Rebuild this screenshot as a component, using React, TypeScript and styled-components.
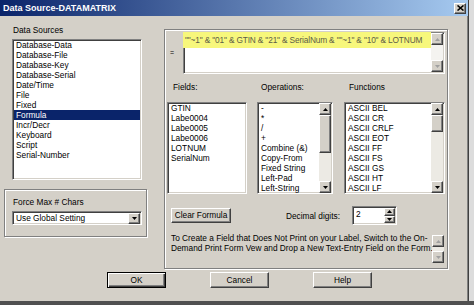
import * as React from 'react';
import styled, { createGlobalStyle, css } from 'styled-components';

const GlobalStyle = createGlobalStyle`
  html, body {
    margin: 0;
    padding: 0;
    background: #dcdcdc;
  }
  body {
    font-family: "Liberation Sans", Arial, sans-serif;
    font-size: 8.3px;
    color: #000;
  }
  * {
    box-sizing: border-box;
  }
`;

const sunken = css`
  background: #ffffff;
  border: 1px solid;
  border-color: #808080 #ffffff #ffffff #808080;
  box-shadow: inset 1px 1px 0 #404040, inset -1px -1px 0 #d4d0c8;
`;

const raised = css`
  background: #d4d0c8;
  border: 1px solid;
  border-color: #ffffff #404040 #404040 #ffffff;
  box-shadow: inset -1px -1px 0 #808080;
`;

const etched = css`
  border: 1px solid #808080;
  box-shadow: inset 1px 1px 0 #ffffff, 1px 1px 0 #ffffff;
`;

const S = {
  Page: styled.div`
    width: 474px;
    display: flex;
    flex-direction: column;
  `,
  Window: styled.div`
    width: 469px;
    height: 301px;
    background: #d4d0c8;
    border-right: 1px solid #404040;
    box-shadow: inset -1px 0 0 #808080;
    display: flex;
    flex-direction: column;
  `,
  Band: styled.div`
    height: 4px;
    background: #505050;
  `,
  TitleBar: styled.div`
    height: 16px;
    display: flex;
    align-items: center;
    background: linear-gradient(to right, #0a246a, #a6caf0);
    padding: 0 2px 0 3px;
  `,
  TitleText: styled.div`
    flex: 1;
    color: #ffffff;
    font-weight: bold;
    font-size: 9px;
    line-height: 16px;
  `,
  CloseButton: styled.div`
    ${raised};
    width: 12px;
    height: 11px;
    display: flex;
    align-items: center;
    justify-content: center;
  `,
  MainRow: styled.div`
    display: flex;
    align-items: flex-start;
    padding-top: 9px;
  `,
  LeftColumn: styled.div`
    width: 143px;
    margin-left: 4px;
    display: flex;
    flex-direction: column;
  `,
  Caption: styled.div<{ $indent: number }>`
    line-height: 10px;
    height: 10px;
    padding-left: ${p => p.$indent}px;
    white-space: nowrap;
  `,
  SourceList: styled.div`
    ${sunken};
    margin: 4px 0 0 8px;
    width: 130px;
    height: 141px;
    padding: 0 1px;
    overflow: hidden;
  `,
  Item: styled.div<{ $selected?: boolean }>`
    line-height: 10px;
    height: 10px;
    padding-left: 2px;
    white-space: nowrap;
    background: ${p => (p.$selected ? '#0a246a' : 'transparent')};
    color: ${p => (p.$selected ? '#ffffff' : '#000000')};
  `,
  ForceGroup: styled.div`
    ${etched};
    margin-top: 9px;
    height: 48px;
    padding: 7px 0 0 7px;
  `,
  Select: styled.div`
    ${sunken};
    margin-top: 4px;
    width: 130px;
    height: 14px;
    display: flex;
    align-items: center;
    padding: 1px;
  `,
  SelectValue: styled.div`
    flex: 1;
    padding-left: 2px;
    line-height: 10px;
    white-space: nowrap;
  `,
  DropButton: styled.div`
    ${raised};
    width: 12px;
    height: 11px;
    display: flex;
    align-items: center;
    justify-content: center;
  `,
  RightGroup: styled.div`
    ${etched};
    margin: 4px 0 0 17px;
    width: 284px;
    height: 240px;
    display: flex;
    flex-direction: column;
  `,
  FormulaRow: styled.div`
    display: flex;
    margin-top: 2px;
    padding-left: 5px;
  `,
  EqualsSign: styled.div`
    width: 13px;
    line-height: 42px;
    font-size: 7px;
  `,
  FormulaBox: styled.div`
    ${sunken};
    width: 262px;
    height: 42px;
    display: flex;
    padding: 0 1px 1px 0;
  `,
  FormulaContent: styled.div`
    flex: 1;
    overflow: hidden;
    margin-top: -1px;
    margin-left: -1px;
  `,
  FormulaLine: styled.div`
    background: #f7f77c;
    height: 16px;
    line-height: 16px;
    padding-left: 2px;
    color: #5c5c48;
    letter-spacing: -0.15px;
    white-space: nowrap;
  `,
  Columns: styled.div`
    display: flex;
    margin-top: 8px;
    padding-left: 2px;
  `,
  Column: styled.div<{ $width: number; $gap: number }>`
    width: ${p => p.$width}px;
    margin-left: ${p => p.$gap}px;
    display: flex;
    flex-direction: column;
  `,
  ColumnList: styled.div`
    ${sunken};
    margin-top: 10px;
    height: 92px;
    display: flex;
    padding: 0 1px;
  `,
  ListBody: styled.div`
    flex: 1;
    overflow: hidden;
  `,
  ScrollBar: styled.div<{ $height?: number }>`
    width: 12px;
    display: flex;
    flex-direction: column;
    ${p => (p.$height ? `height: ${p.$height}px;` : '')}
  `,
  ScrollButton: styled.div`
    ${raised};
    width: 12px;
    height: 12px;
    flex-shrink: 0;
    display: flex;
    align-items: center;
    justify-content: center;
  `,
  Track: styled.div<{ $color: string }>`
    flex: 1;
    background: ${p => p.$color};
  `,
  Thumb: styled.div<{ $top: number; $size: number }>`
    ${raised};
    margin-top: ${p => p.$top}px;
    height: ${p => p.$size}px;
  `,
  ToolRow: styled.div`
    display: flex;
    align-items: center;
    margin-top: 12px;
    height: 19px;
    padding-left: 6px;
  `,
  SmallButton: styled.div`
    ${raised};
    width: 60px;
    height: 15px;
    line-height: 13px;
    text-align: center;
    white-space: nowrap;
  `,
  DecimalLabel: styled.div`
    margin-left: 55px;
    width: 66px;
    white-space: nowrap;
  `,
  Spinner: styled.div`
    ${sunken};
    width: 45px;
    height: 19px;
    display: flex;
    padding: 1px;
  `,
  SpinValue: styled.div`
    flex: 1;
    padding-left: 2px;
    line-height: 12px;
  `,
  SpinButtons: styled.div`
    display: flex;
    flex-direction: column;
  `,
  SpinButton: styled.div`
    ${raised};
    width: 11px;
    height: 8px;
    display: flex;
    align-items: center;
    justify-content: center;
  `,
  InfoRow: styled.div`
    display: flex;
    margin-top: 9px;
    padding-left: 6px;
  `,
  InfoText: styled.div`
    width: 256px;
    margin-top: -1px;
    line-height: 10px;
    white-space: pre;
  `,
  InfoScroll: styled.div`
    margin-left: 5px;
    padding-top: 1px;
  `,
  ButtonRow: styled.div`
    display: flex;
    gap: 44px;
    margin-top: 3px;
    padding-left: 107px;
  `,
  DialogButton: styled.div<{ $default?: boolean }>`
    ${raised};
    width: 59px;
    height: 16px;
    line-height: 14px;
    text-align: center;
    ${p =>
      p.$default &&
      css`
        border: 1px solid #000;
        box-shadow: inset 1px 1px 0 #ffffff, inset -1px -1px 0 #404040, inset -2px -2px 0 #808080;
      `}
  `
};

const Arrow: React.FC<{ dir: 'up' | 'down'; disabled?: boolean }> = ({ dir, disabled }) => (
  <svg width="5" height="3" viewBox="0 0 5 3">
    <path d={dir === 'up' ? 'M2.5 0 L5 3 L0 3 Z' : 'M0 0 L5 0 L2.5 3 Z'} fill={disabled ? '#a0a0a0' : '#000000'} />
  </svg>
);

interface IScrollProps {
  thumbTop?: number;
  thumbSize?: number;
  disabled?: boolean;
  height?: number;
  track?: string;
}

const VScroll: React.FC<IScrollProps> = ({ thumbTop, thumbSize, disabled, height, track = '#eceae4' }) => (
  <S.ScrollBar $height={height}>
    <S.ScrollButton>
      <Arrow dir="up" disabled={disabled} />
    </S.ScrollButton>
    <S.Track $color={track}>
      {thumbSize ? <S.Thumb $top={thumbTop || 0} $size={thumbSize} /> : null}
    </S.Track>
    <S.ScrollButton>
      <Arrow dir="down" disabled={disabled} />
    </S.ScrollButton>
  </S.ScrollBar>
);

const dataSources = [
  'Database-Data',
  'Database-File',
  'Database-Key',
  'Database-Serial',
  'Date/Time',
  'File',
  'Fixed',
  'Formula',
  'Incr/Decr',
  'Keyboard',
  'Script',
  'Serial-Number'
];
const fields = ['GTIN', 'Labe0004', 'Labe0005', 'Labe0006', 'LOTNUM', 'SerialNum'];
const operations = ['-', '*', '/', '+', 'Combine (&)', 'Copy-From', 'Fixed String', 'Left-Pad', 'Left-String'];
const functions = ['ASCII BEL', 'ASCII CR', 'ASCII CRLF', 'ASCII EOT', 'ASCII FF', 'ASCII FS', 'ASCII GS', 'ASCII HT', 'ASCII LF'];

const formula = '""~1" & "01" & GTIN & "21" & SerialNum & ""~1" & "10" & LOTNUM';

const App: React.FC = () => {
  return (
    <S.Page>
      <GlobalStyle />
      <S.Window>
        <S.TitleBar>
          <S.TitleText>Data Source-DATAMATRIX</S.TitleText>
          <S.CloseButton>
            <svg width="7" height="6" viewBox="0 0 7 6">
              <path d="M0.5 0.5 L6.5 5.5 M6.5 0.5 L0.5 5.5" stroke="#000" strokeWidth="1.6" />
            </svg>
          </S.CloseButton>
        </S.TitleBar>
        <S.MainRow>
          <S.LeftColumn>
            <S.Caption $indent={9}>Data Sources</S.Caption>
            <S.SourceList>
              {dataSources.map(el => (
                <S.Item key={el} $selected={el === 'Formula'}>
                  {el}
                </S.Item>
              ))}
            </S.SourceList>
            <S.ForceGroup>
              <S.Caption $indent={1}>Force Max # Chars</S.Caption>
              <S.Select>
                <S.SelectValue>Use Global Setting</S.SelectValue>
                <S.DropButton>
                  <Arrow dir="down" />
                </S.DropButton>
              </S.Select>
            </S.ForceGroup>
          </S.LeftColumn>
          <S.RightGroup>
            <S.FormulaRow>
              <S.EqualsSign>=</S.EqualsSign>
              <S.FormulaBox>
                <S.FormulaContent>
                  <S.FormulaLine>{formula}</S.FormulaLine>
                </S.FormulaContent>
                <VScroll disabled track="#f4f3f0" />
              </S.FormulaBox>
            </S.FormulaRow>
            <S.Columns>
              <S.Column $width={80} $gap={0}>
                <S.Caption $indent={6}>Fields:</S.Caption>
                <S.ColumnList>
                  <S.ListBody>
                    {fields.map(el => (
                      <S.Item key={el}>{el}</S.Item>
                    ))}
                  </S.ListBody>
                </S.ColumnList>
              </S.Column>
              <S.Column $width={76} $gap={10}>
                <S.Caption $indent={4}>Operations:</S.Caption>
                <S.ColumnList>
                  <S.ListBody>
                    {operations.map(el => (
                      <S.Item key={el}>{el}</S.Item>
                    ))}
                  </S.ListBody>
                  <VScroll thumbTop={0} thumbSize={38} />
                </S.ColumnList>
              </S.Column>
              <S.Column $width={101} $gap={11}>
                <S.Caption $indent={5}>Functions</S.Caption>
                <S.ColumnList>
                  <S.ListBody>
                    {functions.map(el => (
                      <S.Item key={el}>{el}</S.Item>
                    ))}
                  </S.ListBody>
                  <VScroll thumbTop={0} thumbSize={17} />
                </S.ColumnList>
              </S.Column>
            </S.Columns>
            <S.ToolRow>
              <S.SmallButton>Clear Formula</S.SmallButton>
              <S.DecimalLabel>Decimal digits:</S.DecimalLabel>
              <S.Spinner>
                <S.SpinValue>2</S.SpinValue>
                <S.SpinButtons>
                  <S.SpinButton>
                    <Arrow dir="up" />
                  </S.SpinButton>
                  <S.SpinButton>
                    <Arrow dir="down" />
                  </S.SpinButton>
                </S.SpinButtons>
              </S.Spinner>
            </S.ToolRow>
            <S.InfoRow>
              <S.InfoText>
                {'To Create a Field that Does Not Print on your Label, Switch to the On-\nDemand Print Form Vew and Drop a New Text-Entry Field on the Form.'}
              </S.InfoText>
              <S.InfoScroll>
                <VScroll disabled height={28} track="#eceae4" />
              </S.InfoScroll>
            </S.InfoRow>
          </S.RightGroup>
        </S.MainRow>
        <S.ButtonRow>
          <S.DialogButton $default>OK</S.DialogButton>
          <S.DialogButton>Cancel</S.DialogButton>
          <S.DialogButton>Help</S.DialogButton>
        </S.ButtonRow>
      </S.Window>
      <S.Band />
    </S.Page>
  );
};

export default App;
